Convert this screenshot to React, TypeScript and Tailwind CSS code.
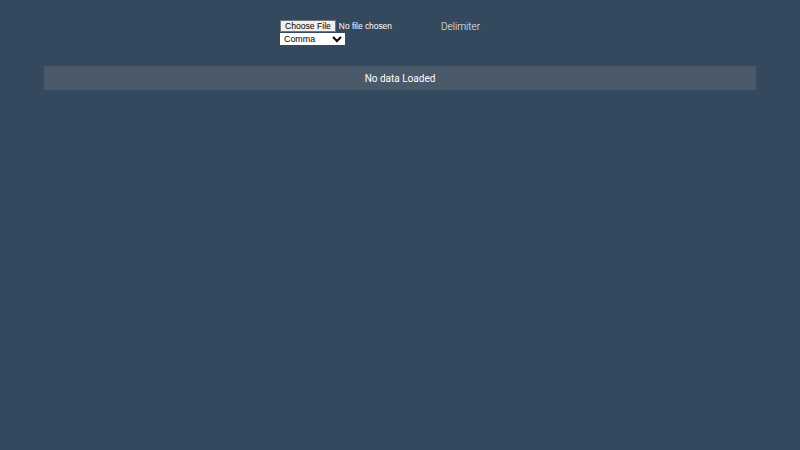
import React from "react";

export default function App() {
    return (
        <div className="min-h-[450px] w-full bg-[#34495e] font-['Roboto',sans-serif]">
            <div className="flex pt-[20px] pl-[280px]">
                <div className="flex w-[161px] flex-col items-start">
                    <input
                        type="file"
                        className="h-[12px] w-[161px] text-[8.4px] leading-[10px] text-white font-['Liberation_Sans',Arial,sans-serif] file:mr-[3px] file:h-[12px] file:border file:border-[#767676] file:bg-[#efefef] file:px-[4px] file:py-0 file:text-[8.6px] file:text-black file:leading-[10px]"
                    />
                    <select className="mt-px h-[12px] w-[65px] bg-white text-[8.9px] leading-[10px] text-black font-['Liberation_Sans',Arial,sans-serif]">
                        <option>Comma</option>
                        <option>Semicolon</option>
                        <option>Tab</option>
                    </select>
                </div>
                <span className="mt-[1px] text-[10px] font-light leading-[12px] text-[#f0f3f6]">Delimiter</span>
            </div>
            <div className="mx-[44px] mt-[21px] flex h-[24px] items-center justify-center bg-[#4a5a6b] text-[10px] text-white">
                No data Loaded
            </div>
        </div>
    );
}
